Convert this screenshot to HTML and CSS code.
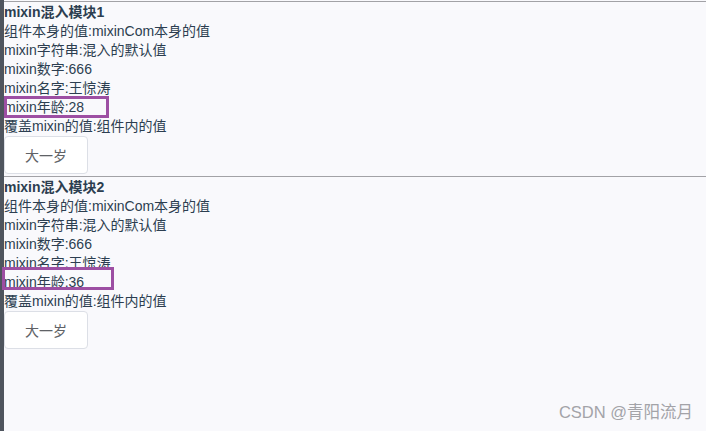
FILE: index.html
```html
<!DOCTYPE html>
<html lang="en">
  <head>
    <meta charset="UTF-8" />
    <title>mixin</title>
    <link rel="stylesheet" href="styles.css">
  </head>
  <body>
    <div class="page">
      <div class="sidebar"></div>
      <div class="content">
        <div class="module">
          <div class="title">mixin混入模块1</div>
          <div class="row">组件本身的值:mixinCom本身的值</div>
          <div class="row">mixin字符串:混入的默认值</div>
          <div class="row">mixin数字:666</div>
          <div class="row">mixin名字:王惊涛</div>
          <div class="row">mixin年龄:28</div>
          <div class="row">覆盖mixin的值:组件内的值</div>
          <button class="btn">大一岁</button>
        </div>
        <div class="module">
          <div class="title">mixin混入模块2</div>
          <div class="row">组件本身的值:mixinCom本身的值</div>
          <div class="row">mixin字符串:混入的默认值</div>
          <div class="row">mixin数字:666</div>
          <div class="row">mixin名字:王惊涛</div>
          <div class="row">mixin年龄:36</div>
          <div class="row">覆盖mixin的值:组件内的值</div>
          <button class="btn">大一岁</button>
        </div>
      </div>
      <!-- annotation marks -->
      <div class="mark mark1"></div>
      <div class="mark mark2"></div>
      <div class="watermark">CSDN @青阳流月</div>
    </div>
  </body>
</html>
```

FILE: styles.css
```css
html,
body {
  margin: 0;
  padding: 0;
}
.page {
  position: relative;
  display: flex;
  width: 706px;
  height: 431px;
  background-color: #f9f9fc;
  font-family: "Liberation Sans", "Noto Sans CJK SC", sans-serif;
  font-size: 14px;
  color: #2c3e50;
  overflow: hidden;
}
.sidebar {
  width: 4px;
  background-color: #4f555e;
}
.content {
  flex: 1;
  padding-top: 1px;
}
.module {
  border-top: 1px solid #a2a2a6;
  padding-top: 1px;
  padding-bottom: 2px;
}
.title {
  font-weight: bold;
  line-height: 19px;
}
.row {
  line-height: 19px;
}
.btn {
  display: block;
  width: 84px;
  height: 38px;
  padding: 0;
  background-color: #fff;
  border: 1px solid #dcdfe6;
  border-radius: 4px;
  font-family: "Liberation Sans", "Noto Sans CJK SC", sans-serif;
  font-size: 14px;
  color: #606266;
}
.mark {
  position: absolute;
  border: 3px solid #9d4fa3;
  box-sizing: border-box;
}
.mark1 {
  left: 4px;
  top: 96px;
  width: 105px;
  height: 22px;
}
.mark2 {
  left: 2px;
  top: 267px;
  width: 112px;
  height: 23px;
}
.watermark {
  position: absolute;
  right: 13px;
  bottom: 8px;
  font-size: 16.5px;
  color: #a3a3a8;
}
```
